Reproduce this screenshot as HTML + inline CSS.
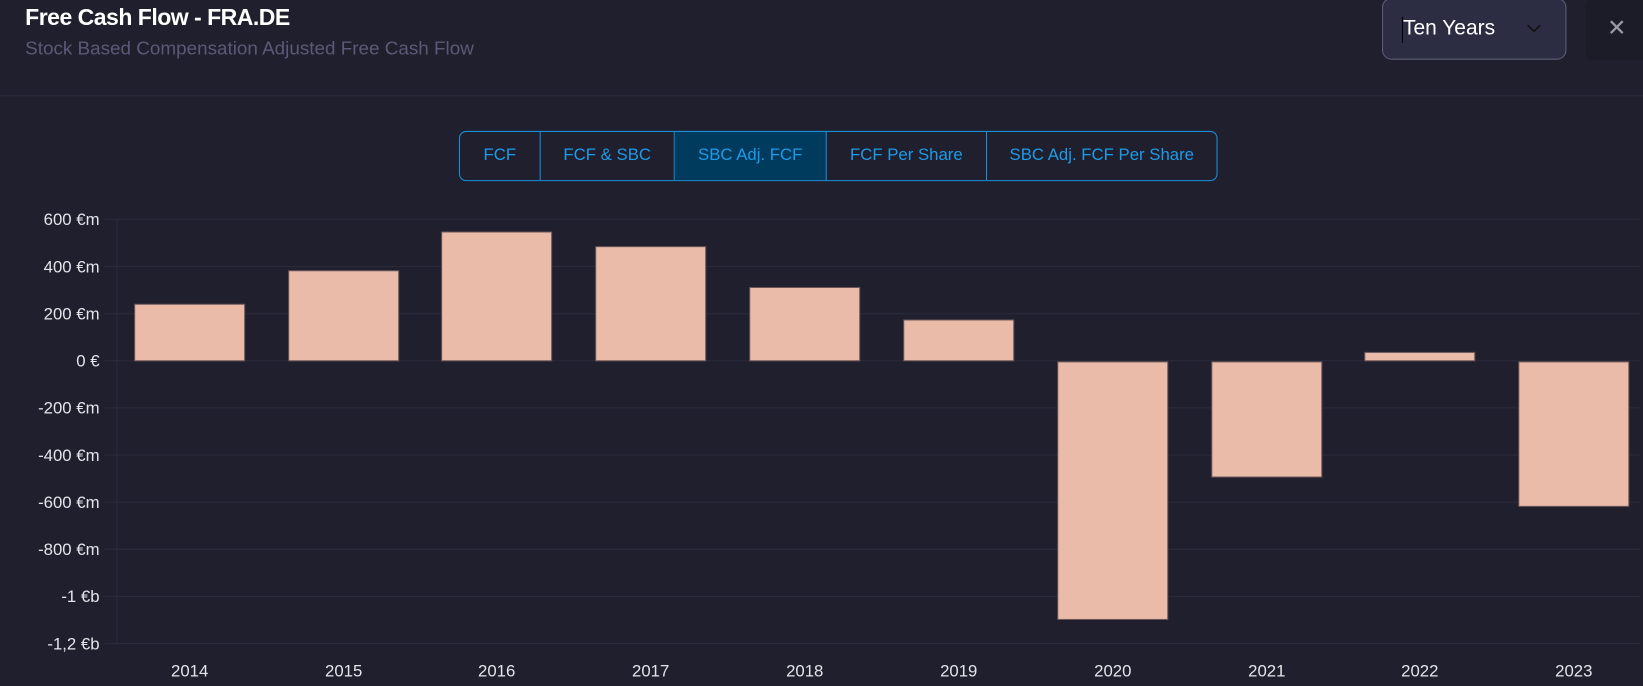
<!DOCTYPE html>
<html><head><meta charset="utf-8"><style>
body{margin:0;width:1643px;height:686px;background:#1f1f2d;font-family:"Liberation Sans",sans-serif;overflow:hidden;position:relative}
#w{position:absolute;left:0;top:0;width:1568px;height:655px;transform:scale(1.0478,1.0473);transform-origin:0 0}
.t{position:absolute;left:24px;top:4px;color:#fff;font-size:22px;font-weight:bold;letter-spacing:-0.5px}
.s{position:absolute;left:24px;top:36px;color:#5a5a78;font-size:18px}
.hr{position:absolute;left:0;top:91px;width:1643px;height:1px;background:#2c2c3e}
.dd{position:absolute;left:1319px;top:-2px;width:176px;height:59px;box-sizing:border-box;border:1px solid #5c5f77;border-radius:9px;background:#2c2c42;color:#fff;font-size:20px}
.dd span{position:absolute;left:19px;top:17px}
.dd i{position:absolute;left:18px;top:17px;width:1px;height:25px;background:#000}
.cl{position:absolute;left:1513px;top:-2px;width:60px;height:60px;background:#1c1c29;border-radius:8px;color:#9a9aa8;font-size:22px;text-align:center;line-height:58px}
.tabs{position:absolute;left:438px;top:125px;width:724px;height:48px;box-sizing:border-box;border:1px solid #1a8fd6;border-radius:7px;display:flex;overflow:hidden}
.tabs div{color:#1e9be8;font-size:16px;display:flex;align-items:center;justify-content:center;border-right:1px solid #1a8fd6;box-sizing:border-box}
.tabs div:last-child{border-right:none}
.tabs .a{background:#003a5c}
</style></head><body><div id="w">
<div class="t">Free Cash Flow - FRA.DE</div>
<div class="s">Stock Based Compensation Adjusted Free Cash Flow</div>
<div class="hr"></div>
<div class="dd"><i></i><span>Ten Years</span>
<svg style="position:absolute;left:137px;top:23px" width="14" height="10"><path d="M1 2 L7 8 L13 2" fill="none" stroke="#111" stroke-width="1.5"/></svg></div>
<div class="cl">✕</div>
<div class="tabs">
<div style="width:77px">FCF</div><div style="width:128px">FCF &amp; SBC</div><div class="a" style="width:145px">SBC Adj. FCF</div><div style="width:153px">FCF Per Share</div><div style="flex:1">SBC Adj. FCF Per Share</div>
</div>
<svg style="position:absolute;left:0;top:0" width="1568" height="655">
<g stroke="#2a2a3a" stroke-width="1">
<line x1="100" y1="209.5" x2="1565" y2="209.5"/><line x1="100" y1="254.5" x2="1565" y2="254.5"/><line x1="100" y1="299.5" x2="1565" y2="299.5"/><line x1="100" y1="344.5" x2="1565" y2="344.5"/><line x1="100" y1="389.5" x2="1565" y2="389.5"/><line x1="100" y1="434.5" x2="1565" y2="434.5"/><line x1="100" y1="479.5" x2="1565" y2="479.5"/><line x1="100" y1="524.5" x2="1565" y2="524.5"/><line x1="100" y1="569.5" x2="1565" y2="569.5"/><line x1="100" y1="614.5" x2="1565" y2="614.5"/>
<line x1="111.5" y1="209" x2="111.5" y2="615"/>
</g>
<g fill="#e9bba8" stroke="#6b5558" stroke-width="1">
<rect x="128.5" y="290.5" width="105" height="54"/>
<rect x="275.5" y="258.5" width="105" height="86"/>
<rect x="421.5" y="221.5" width="105" height="123"/>
<rect x="568.5" y="235.5" width="105" height="109"/>
<rect x="715.5" y="274.5" width="105" height="70"/>
<rect x="862.5" y="305.5" width="105" height="39"/>
<rect x="1009.5" y="345.5" width="105" height="246"/>
<rect x="1156.5" y="345.5" width="105" height="110"/>
<rect x="1302.5" y="336.5" width="105" height="8"/>
<rect x="1449.5" y="345.5" width="105" height="138"/>
</g>
<g fill="#e4e4ea" font-size="16" text-anchor="end" font-family="Liberation Sans,sans-serif">
<text x="95" y="215">600 €m</text><text x="95" y="260">400 €m</text><text x="95" y="305">200 €m</text><text x="95" y="350">0 €</text><text x="95" y="395">-200 €m</text><text x="95" y="440">-400 €m</text><text x="95" y="485">-600 €m</text><text x="95" y="530">-800 €m</text><text x="95" y="575">-1 €b</text><text x="95" y="620">-1,2 €b</text>
</g>
<g fill="#e4e4ea" font-size="16" text-anchor="middle" font-family="Liberation Sans,sans-serif">
<text x="181" y="646">2014</text><text x="328" y="646">2015</text><text x="474" y="646">2016</text><text x="621" y="646">2017</text><text x="768" y="646">2018</text><text x="915" y="646">2019</text><text x="1062" y="646">2020</text><text x="1209" y="646">2021</text><text x="1355" y="646">2022</text><text x="1502" y="646">2023</text>
</g>
</svg>
</div></body></html>
